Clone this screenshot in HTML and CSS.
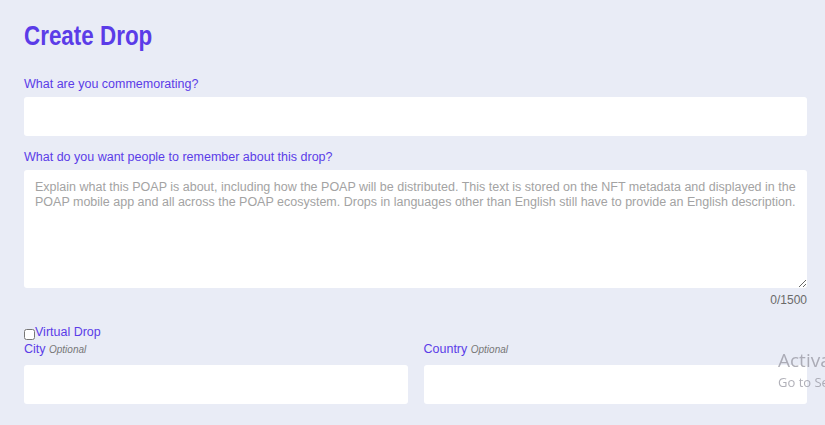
FILE: index.html
```html
<!DOCTYPE html>
<html>
    <head>
        <title>Create Drop</title>
        <link rel="stylesheet" href="styles.css">
    </head>
    <body>
        <form class="drop-form">
            <h1 class="title"><span class="title-text">Create Drop</span></h1>
            <div class="field">
                <label class="label" for="name">What are you commemorating?</label>
                <input class="input" id="name" type="text">
            </div>
            <div class="field">
                <label class="label" for="desc">What do you want people to remember about this drop?</label>
                <textarea class="input textarea" id="desc" placeholder="Explain what this POAP is about, including how the POAP will be distributed. This text is stored on the NFT metadata and displayed in the POAP mobile app and all across the POAP ecosystem. Drops in languages other than English still have to provide an English description."></textarea>
                <div class="counter">0/1500</div>
            </div>
            <label class="check"><input type="checkbox" class="check-box">Virtual Drop</label>
            <div class="row">
                <div class="field">
                    <label class="label small-gap" for="city">City <em class="optional">Optional</em></label>
                    <input class="input" id="city" type="text">
                </div>
                <div class="field">
                    <label class="label small-gap" for="country">Country <em class="optional">Optional</em></label>
                    <input class="input" id="country" type="text">
                </div>
            </div>
        </form>
        <div class="activate">
            <div class="activate-title">Activate Windows</div>
            <div class="activate-sub">Go to Settings to activate Windows.</div>
        </div>
    </body>
</html>
```

FILE: styles.css
```css
html {
    background: #e9ecf6;
}
body {
    margin: 0;
    padding: 0 18px 0 24px;
    font-family: "Liberation Sans", Arial, sans-serif;
    overflow: hidden;
    height: 425px;
}
.title {
    margin: 0;
    padding-top: 20px;
    font-size: 27px;
    font-weight: bold;
    color: #5b3ce8;
    line-height: 32px;
    height: 56px;
}
.title-text {
    display: inline-block;
    transform: scaleX(0.83);
    transform-origin: left;
}
.field {
    display: flex;
    flex-direction: column;
    flex: 1;
}
.label {
    font-size: 12.5px;
    color: #5b3ce8;
    line-height: 16px;
    padding-bottom: 5px;
}
.small-gap {
    padding-bottom: 7px;
}
.optional {
    font-size: 10px;
    color: #777;
}
.input {
    box-sizing: border-box;
    height: 39px;
    border: none;
    border-radius: 3px;
    background: #fff;
    margin: 0 0 13px;
    font-family: inherit;
}
.textarea {
    height: 118px;
    margin: 0;
    padding: 10px 11px;
    font-size: 12.5px;
    line-height: 15px;
    resize: vertical;
}
.textarea::placeholder {
    color: #a3a3a3;
}
.counter {
    text-align: right;
    font-size: 12px;
    color: #6a6a6a;
    line-height: 16px;
    padding: 4px 0 17px;
}
.check {
    display: flex;
    align-items: flex-end;
    font-size: 12.5px;
    color: #5b3ce8;
    line-height: 14px;
}
.check-box {
    margin: 0 0 -1px;
    width: 11px;
    height: 11px;
}
.row {
    display: flex;
    gap: 16px;
    padding-top: 2px;
}
.activate {
    position: fixed;
    left: 778px;
    top: 348px;
    color: rgba(150, 150, 160, .75);
    font-family: "Open Sans", sans-serif;
    white-space: nowrap;
}
.activate-title {
    font-size: 19px;
    line-height: 24px;
}
.activate-sub {
    font-size: 13px;
    line-height: 20px;
}
```
